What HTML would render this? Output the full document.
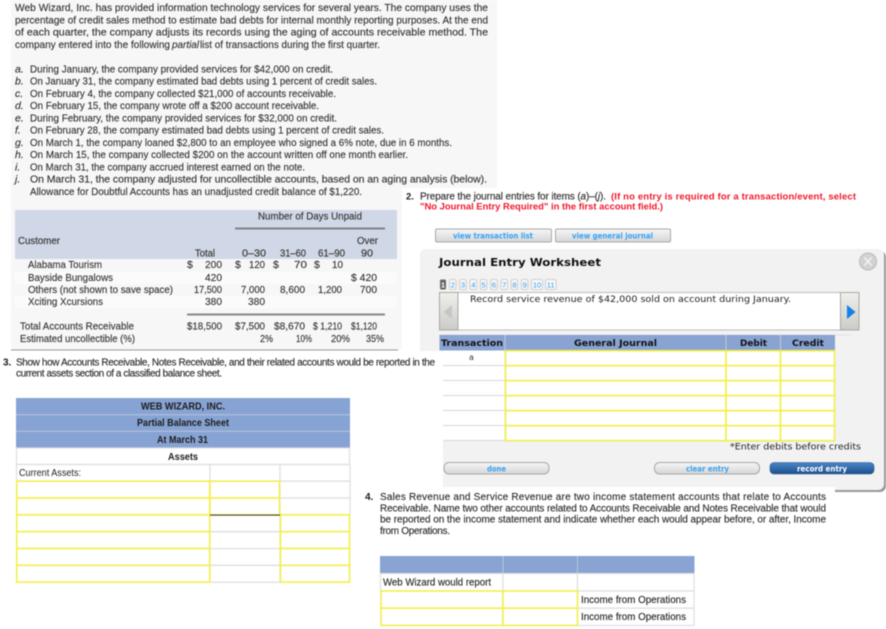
<!DOCTYPE html>
<html lang="en">
<head>
<meta charset="utf-8">
<title>Web Wizard</title>
<style>
html,body{margin:0;padding:0;background:#fff;width:886px;height:629px;overflow:hidden}
svg{display:block;position:absolute;left:0;top:0;filter:blur(.4px)}
text{font-family:"Liberation Sans",sans-serif;font-size:10.5px;fill:#333;stroke:#333;stroke-width:.13px}
.h{font-weight:bold;fill:#1c1c1c;stroke:none;font-size:10px}
.q{fill:#2c2c2c;font-size:10px}
.b{font-weight:bold;font-family:"DejaVu Sans",sans-serif;font-size:8px;fill:#36a2f4;stroke:none}
.n{font-size:7.5px;fill:#2f9bf0;stroke:none;text-anchor:middle}
.r{font-size:9.5px;font-weight:bold;fill:#f0182c;stroke:none}
.t{font-family:"DejaVu Sans",sans-serif;font-weight:bold;font-size:9px;fill:#111;stroke:none}
.v{font-family:"DejaVu Sans",sans-serif;font-size:8.5px;fill:#222;stroke:none}
.y{fill:#fff;stroke:#f3ef4e;stroke-width:1.6}
.c{fill:#fff;stroke:#dedede;stroke-width:1.2}
</style>
</head>
<body>
<svg width="886" height="629" viewBox="0 0 886 629" xmlns="http://www.w3.org/2000/svg">
<defs>
<linearGradient id="g" x1="0" y1="0" x2="0" y2="1"><stop offset="0" stop-color="#f6f6f6"/><stop offset="1" stop-color="#d6d6d6"/></linearGradient>
<linearGradient id="s" x1="0" y1="0" x2="0" y2="1"><stop offset="0" stop-color="#efefeb"/><stop offset="1" stop-color="#cbcbc7"/></linearGradient>
<linearGradient id="u" x1="0" y1="0" x2="0" y2="1"><stop offset="0" stop-color="#4a86c8"/><stop offset="1" stop-color="#1d4f8c"/></linearGradient>
</defs>
<rect width="886" height="629" fill="#fff"/>

<!-- intro background -->
<rect x="11" y="0" width="486" height="188" fill="#f7f7f7"/>
<rect x="11" y="188" width="391" height="162" fill="#f7f7f7"/>

<!-- intro -->
<text x="15" y="11" textLength="473" lengthAdjust="spacingAndGlyphs">Web Wizard, Inc. has provided information technology services for several years. The company uses the</text>
<text x="15" y="23.3" textLength="473" lengthAdjust="spacingAndGlyphs">percentage of credit sales method to estimate bad debts for internal monthly reporting purposes. At the end</text>
<text x="15" y="35.5" textLength="473" lengthAdjust="spacingAndGlyphs">of each quarter, the company adjusts its records using the aging of accounts receivable method. The</text>
<text x="15" y="47.8" textLength="155" lengthAdjust="spacingAndGlyphs">company entered into the following</text>
<text x="172" y="47.8" textLength="27" lengthAdjust="spacingAndGlyphs" font-style="italic">partial</text>
<text x="200" y="47.8" textLength="180" lengthAdjust="spacingAndGlyphs">list of transactions during the first quarter.</text>

<g font-style="italic">
<text x="15" y="72.3">a.</text><text x="15" y="84.6">b.</text><text x="15" y="97">c.</text><text x="15" y="109">d.</text><text x="15" y="121.5">e.</text><text x="15" y="133.7">f.</text><text x="15" y="146">g.</text><text x="15" y="158">h.</text><text x="15" y="170.5">i.</text><text x="15" y="182.7">j.</text>
</g>
<text x="30" y="72.3" textLength="303" lengthAdjust="spacingAndGlyphs">During January, the company provided services for $42,000 on credit.</text>
<text x="30" y="84.6" textLength="347" lengthAdjust="spacingAndGlyphs">On January 31, the company estimated bad debts using 1 percent of credit sales.</text>
<text x="30" y="97" textLength="306" lengthAdjust="spacingAndGlyphs">On February 4, the company collected $21,000 of accounts receivable.</text>
<text x="30" y="109" textLength="289" lengthAdjust="spacingAndGlyphs">On February 15, the company wrote off a $200 account receivable.</text>
<text x="30" y="121.5" textLength="307" lengthAdjust="spacingAndGlyphs">During February, the company provided services for $32,000 on credit.</text>
<text x="30" y="133.7" textLength="354" lengthAdjust="spacingAndGlyphs">On February 28, the company estimated bad debts using 1 percent of credit sales.</text>
<text x="30" y="146" textLength="422" lengthAdjust="spacingAndGlyphs">On March 1, the company loaned $2,800 to an employee who signed a 6% note, due in 6 months.</text>
<text x="30" y="158" textLength="378" lengthAdjust="spacingAndGlyphs">On March 15, the company collected $200 on the account written off one month earlier.</text>
<text x="30" y="170.5" textLength="275" lengthAdjust="spacingAndGlyphs">On March 31, the company accrued interest earned on the note.</text>
<text x="30" y="182.7" textLength="457" lengthAdjust="spacing">On March 31, the company adjusted for uncollectible accounts, based on an aging analysis (below).</text>
<text x="30" y="195" textLength="332" lengthAdjust="spacingAndGlyphs">Allowance for Doubtful Accounts has an unadjusted credit balance of $1,220.</text>

<!-- aging table -->
<rect x="15" y="210" width="382" height="49" fill="#d0d7e6"/>
<rect x="15" y="272" width="382" height="12" fill="#fbfbfb"/>
<rect x="15" y="296" width="382" height="12" fill="#fbfbfb"/>
<rect x="235" y="227.5" width="150" height="2" fill="#7f8288"/>
<text x="258" y="219.5" textLength="104" lengthAdjust="spacingAndGlyphs">Number of Days Unpaid</text>
<text x="18" y="244" textLength="42" lengthAdjust="spacingAndGlyphs">Customer</text>
<text x="357" y="244" textLength="21" lengthAdjust="spacingAndGlyphs">Over</text>
<text x="195" y="256.5" textLength="20" lengthAdjust="spacingAndGlyphs">Total</text>
<text x="242" y="256.5" textLength="24" lengthAdjust="spacingAndGlyphs">0–30</text>
<text x="280" y="256.5" textLength="26" lengthAdjust="spacingAndGlyphs">31–60</text>
<text x="318" y="256.5" textLength="27" lengthAdjust="spacingAndGlyphs">61–90</text>
<text x="361" y="256.5" textLength="12" lengthAdjust="spacingAndGlyphs">90</text>

<text x="28" y="268" textLength="74" lengthAdjust="spacingAndGlyphs">Alabama Tourism</text>
<text x="187" y="268">$</text><text x="205" y="268" textLength="17" lengthAdjust="spacingAndGlyphs">200</text>
<text x="235" y="268">$</text><text x="249" y="268" textLength="16" lengthAdjust="spacingAndGlyphs">120</text>
<text x="273" y="268">$</text><text x="294" y="268" textLength="13" lengthAdjust="spacingAndGlyphs">70</text>
<text x="314" y="268">$</text><text x="332" y="268" textLength="11" lengthAdjust="spacingAndGlyphs">10</text>

<text x="28" y="281" textLength="85" lengthAdjust="spacingAndGlyphs">Bayside Bungalows</text>
<text x="205" y="281" textLength="17" lengthAdjust="spacingAndGlyphs">420</text>
<text x="351" y="281" textLength="26" lengthAdjust="spacingAndGlyphs">$ 420</text>

<text x="28" y="293" textLength="145" lengthAdjust="spacingAndGlyphs">Others (not shown to save space)</text>
<text x="194" y="293" textLength="28" lengthAdjust="spacingAndGlyphs">17,500</text>
<text x="241" y="293" textLength="24" lengthAdjust="spacingAndGlyphs">7,000</text>
<text x="280" y="293" textLength="25" lengthAdjust="spacingAndGlyphs">8,600</text>
<text x="318" y="293" textLength="24" lengthAdjust="spacingAndGlyphs">1,200</text>
<text x="360" y="293" textLength="17" lengthAdjust="spacingAndGlyphs">700</text>

<text x="28" y="305" textLength="75" lengthAdjust="spacingAndGlyphs">Xciting Xcursions</text>
<text x="205" y="305" textLength="17" lengthAdjust="spacingAndGlyphs">380</text>
<text x="248" y="305" textLength="17" lengthAdjust="spacingAndGlyphs">380</text>

<rect x="187" y="313.5" width="198" height="2" fill="#85888e"/>

<text x="20" y="329.5" textLength="114" lengthAdjust="spacingAndGlyphs">Total Accounts Receivable</text>
<text x="187" y="329.5" textLength="35" lengthAdjust="spacingAndGlyphs">$18,500</text>
<text x="235" y="329.5" textLength="30" lengthAdjust="spacingAndGlyphs">$7,500</text>
<text x="274" y="329.5" textLength="31" lengthAdjust="spacingAndGlyphs">$8,670</text>
<text x="313" y="329.5" textLength="29" lengthAdjust="spacingAndGlyphs">$ 1,210</text>
<text x="351" y="329.5" textLength="26" lengthAdjust="spacingAndGlyphs">$1,120</text>

<text x="20" y="342" textLength="115" lengthAdjust="spacingAndGlyphs">Estimated uncollectible (%)</text>
<text x="260" y="342" textLength="13" lengthAdjust="spacingAndGlyphs">2%</text>
<text x="296" y="342" textLength="16" lengthAdjust="spacingAndGlyphs">10%</text>
<text x="331" y="342" textLength="19" lengthAdjust="spacingAndGlyphs">20%</text>
<text x="366" y="342" textLength="18" lengthAdjust="spacingAndGlyphs">35%</text>
<rect x="11" y="349.5" width="387" height="1" fill="#9a9a9a"/>

<!-- Q2 -->
<text class="h" x="406" y="199.5" style="font-size:9.5px">2.</text>
<text class="q" x="420" y="199.5" textLength="186" lengthAdjust="spacing">Prepare the journal entries for items (<tspan font-style="italic">a</tspan>)–(<tspan font-style="italic">j</tspan>).</text>
<text class="r" x="611" y="199.5" textLength="245" lengthAdjust="spacing">(If no entry is required for a transaction/event, select</text>
<text class="r" x="420" y="209.5" textLength="243" lengthAdjust="spacingAndGlyphs">"No Journal Entry Required" in the first account field.)</text>

<!-- top buttons -->
<rect x="435.5" y="229" width="116" height="13" rx="1.5" fill="url(#g)" stroke="#a8a8a8"/>
<rect x="555.5" y="229" width="115" height="13" rx="1.5" fill="url(#g)" stroke="#a8a8a8"/>
<text class="b" x="453" y="238.5" textLength="80" lengthAdjust="spacingAndGlyphs">view transaction list</text>
<text class="b" x="572" y="238.5" textLength="81" lengthAdjust="spacingAndGlyphs">view general journal</text>

<!-- panel -->
<rect x="422" y="251" width="464" height="241" rx="6" fill="#999"/>
<rect x="420" y="249" width="464" height="241" rx="6" fill="#f2f2f2"/>
<rect x="416" y="351" width="27" height="136" fill="#fff"/>
<rect x="416" y="487" width="419" height="12" fill="#fff"/>

<text x="439" y="266" textLength="162" lengthAdjust="spacingAndGlyphs" style="font-family:'DejaVu Sans',sans-serif;font-weight:bold;font-size:11px;fill:#111;stroke:none">Journal Entry Worksheet</text>

<circle cx="868" cy="261.5" r="8.5" fill="#d2d2d2" stroke="#bbb"/>
<path d="M864.500 257.500l7 8M871.500 257.500l-7 8" stroke="#f4f4f4" stroke-width="1.400" fill="none"/>

<!-- step numbers -->
<rect x="440" y="279.500" width="6" height="10" rx="1.500" fill="#666"/>
<text class="n" x="443" y="287.500" style="fill:#fff;font-weight:bold">1</text>
<g fill="#f8f8f8" stroke="#c4c4c4" stroke-width=".8">
<rect x="449.500" y="279.500" width="6.500" height="10" rx="1.500"/><rect x="459.700" y="279.500" width="6.500" height="10" rx="1.500"/><rect x="470" y="279.500" width="6.500" height="10" rx="1.500"/><rect x="480.300" y="279.500" width="6.500" height="10" rx="1.500"/><rect x="490.800" y="279.500" width="6.500" height="10" rx="1.500"/><rect x="501" y="279.500" width="6.500" height="10" rx="1.500"/><rect x="511.200" y="279.500" width="6.500" height="10" rx="1.500"/><rect x="521.400" y="279.500" width="6.500" height="10" rx="1.500"/><rect x="531.500" y="279.500" width="11" height="10" rx="1.500"/><rect x="545.500" y="279.500" width="10.500" height="10" rx="1.500"/>
</g>
<text class="n" x="452.800" y="287.500">2</text><text class="n" x="463" y="287.500">3</text><text class="n" x="473.300" y="287.500">4</text><text class="n" x="483.500" y="287.500">5</text><text class="n" x="494" y="287.500">6</text><text class="n" x="504.200" y="287.500">7</text><text class="n" x="514.500" y="287.500">8</text><text class="n" x="524.700" y="287.500">9</text><text class="n" x="537" y="287.500">10</text><text class="n" x="550.700" y="287.500">11</text>

<!-- prompt -->
<rect x="439.500" y="292.500" width="419" height="37.500" fill="#fff" stroke="#bdbdbd"/>
<rect x="439.500" y="292.500" width="18.500" height="37.500" fill="url(#s)" stroke="#a8a8a4"/>
<rect x="840.500" y="292.500" width="18.500" height="37.500" fill="url(#s)" stroke="#a8a8a4"/>
<path d="M452 305v14l-8.500-7z" fill="#c6c6c6"/>
<path d="M847 305v14l8.500-7z" fill="#1680e8"/>
<text class="v" x="470" y="302" textLength="321" lengthAdjust="spacingAndGlyphs">Record service revenue of $42,000 sold on account during January.</text>
<rect x="439" y="334.500" width="412" height="1" fill="#e2e2e2"/>

<!-- journal table -->
<rect x="439.500" y="335" width="395.500" height="15.500" fill="#89a3d2"/>
<path d="M505 335v15.500M726 335v15.500M780.500 335v15.500" stroke="#c2cbdc" stroke-width="1"/>
<text class="t" x="441" y="346" textLength="62" lengthAdjust="spacingAndGlyphs">Transaction</text>
<text class="t" x="574" y="346" textLength="83" lengthAdjust="spacingAndGlyphs">General Journal</text>
<text class="t" x="740" y="346" textLength="27" lengthAdjust="spacingAndGlyphs">Debit</text>
<text class="t" x="792" y="346" textLength="32" lengthAdjust="spacingAndGlyphs">Credit</text>
<rect x="443" y="350.500" width="62" height="90" fill="#fff"/>
<path d="M443 365.500h62M443 380.500h62M443 395.500h62M443 410.500h62M443 425.500h62M443 440.500h62M505 350.500v90" stroke="#d8d8d8" stroke-width="1" fill="none"/>
<text x="469" y="360" style="font-family:'DejaVu Sans',sans-serif;font-size:8px;fill:#333;stroke:none">a</text>
<rect class="y" x="505.500" y="350.700" width="220.500" height="15"/><rect class="y" x="726" y="350.700" width="54.500" height="15"/><rect class="y" x="780.500" y="350.700" width="54" height="15"/>
<rect class="y" x="505.500" y="365.700" width="220.500" height="15"/><rect class="y" x="726" y="365.700" width="54.500" height="15"/><rect class="y" x="780.500" y="365.700" width="54" height="15"/>
<rect class="y" x="505.500" y="380.700" width="220.500" height="15"/><rect class="y" x="726" y="380.700" width="54.500" height="15"/><rect class="y" x="780.500" y="380.700" width="54" height="15"/>
<rect class="y" x="505.500" y="395.700" width="220.500" height="15"/><rect class="y" x="726" y="395.700" width="54.500" height="15"/><rect class="y" x="780.500" y="395.700" width="54" height="15"/>
<rect class="y" x="505.500" y="410.700" width="220.500" height="15"/><rect class="y" x="726" y="410.700" width="54.500" height="15"/><rect class="y" x="780.500" y="410.700" width="54" height="15"/>
<rect class="y" x="505.500" y="425.700" width="220.500" height="15"/><rect class="y" x="726" y="425.700" width="54.500" height="15"/><rect class="y" x="780.500" y="425.700" width="54" height="15"/>
<text class="v" x="730" y="449.500" textLength="131" lengthAdjust="spacingAndGlyphs">*Enter debits before credits</text>

<!-- bottom buttons -->
<rect x="444" y="462.500" width="105" height="11.500" rx="5" fill="url(#g)" stroke="#a8a8a8"/>
<rect x="654.500" y="462.500" width="105" height="11.500" rx="5" fill="url(#g)" stroke="#a8a8a8"/>
<rect x="770" y="462.500" width="104" height="11.500" rx="4" fill="url(#u)" stroke="#2a5a94" stroke-width=".6"/>
<text class="b" x="487" y="471.500" textLength="19" lengthAdjust="spacingAndGlyphs">done</text>
<text class="b" x="686" y="471.500" textLength="43" lengthAdjust="spacingAndGlyphs">clear entry</text>
<text class="b" x="797" y="471.500" textLength="50" lengthAdjust="spacingAndGlyphs" style="fill:#fff">record entry</text>

<!-- Q3 -->
<text class="h" x="3" y="365.500">3.</text>
<text class="q" x="16" y="365.500" textLength="419" lengthAdjust="spacing">Show how Accounts Receivable, Notes Receivable, and their related accounts would be reported in the</text>
<text class="q" x="16" y="376.500" textLength="206" lengthAdjust="spacing">current assets section of a classified balance sheet.</text>

<!-- balance sheet -->
<rect x="16" y="398" width="334" height="50" fill="#87a3d3"/>
<path d="M16 414.700h334M16 431.300h334" stroke="#b9c6de" stroke-width="1"/>
<rect x="16.500" y="448" width="333" height="16.500" fill="#fff" stroke="#dedede" stroke-width="1.200"/>
<text class="h" x="141" y="409.500" textLength="84" lengthAdjust="spacingAndGlyphs">WEB WIZARD, INC.</text>
<text class="h" x="137" y="426" textLength="92" lengthAdjust="spacingAndGlyphs">Partial Balance Sheet</text>
<text class="h" x="157" y="443" textLength="51" lengthAdjust="spacingAndGlyphs">At March 31</text>
<text class="h" x="168" y="460" textLength="30" lengthAdjust="spacingAndGlyphs">Assets</text>
<rect class="c" x="16.500" y="464.500" width="193.500" height="16.700"/>
<rect class="c" x="210" y="464.500" width="70" height="16.700"/>
<rect class="c" x="280" y="464.500" width="70" height="16.700"/>
<text x="19" y="476" textLength="62" lengthAdjust="spacingAndGlyphs" style="font-size:10px;fill:#222;stroke:none">Current Assets:</text>
<rect class="c" x="280" y="481.200" width="70" height="16.800"/>
<rect class="c" x="280" y="498" width="70" height="16.800"/>
<rect class="c" x="210" y="515" width="70" height="16.800"/>
<rect class="c" x="210" y="531.800" width="70" height="16.800"/>
<rect class="c" x="210" y="548.600" width="70" height="16.800"/>
<rect class="c" x="210" y="565.400" width="70" height="16.800"/>
<rect class="y" x="16.700" y="481.200" width="193" height="16.800"/><rect class="y" x="210" y="481.200" width="69.500" height="16.800"/>
<rect class="y" x="16.700" y="498" width="193" height="16.800"/><rect class="y" x="210" y="498" width="69.500" height="16.800"/>
<rect class="y" x="16.700" y="514.900" width="193" height="16.800"/><rect class="y" x="280.500" y="514.900" width="69" height="16.800"/>
<rect class="y" x="16.700" y="531.700" width="193" height="16.800"/><rect class="y" x="280.500" y="531.700" width="69" height="16.800"/>
<rect class="y" x="16.700" y="548.500" width="193" height="16.800"/><rect class="y" x="280.500" y="548.500" width="69" height="16.800"/>
<rect class="y" x="16.700" y="565.300" width="193" height="16.800"/><rect class="y" x="280.500" y="565.300" width="69" height="16.800"/>
<rect x="210" y="514.600" width="70" height="1" fill="#333"/>

<!-- Q4 -->
<text class="h" x="365" y="500">4.</text>
<text class="q" x="380" y="500" textLength="446" lengthAdjust="spacing">Sales Revenue and Service Revenue are two income statement accounts that relate to Accounts</text>
<text class="q" x="380" y="511.500" textLength="446" lengthAdjust="spacing">Receivable. Name two other accounts related to Accounts Receivable and Notes Receivable that would</text>
<text class="q" x="380" y="522.700" textLength="446" lengthAdjust="spacing">be reported on the income statement and indicate whether each would appear before, or after, Income</text>
<text class="q" x="380" y="534" textLength="70" lengthAdjust="spacing">from Operations.</text>

<!-- table 4 -->
<rect x="380" y="556" width="314.500" height="17.500" fill="#89a3d2"/>
<path d="M503 556v17.500M577.500 556v17.500" stroke="#b9c6de" stroke-width="1"/>
<rect class="c" x="380.500" y="573.500" width="122.500" height="17.500"/>
<rect class="c" x="503" y="573.500" width="74.500" height="17.500"/>
<rect class="c" x="577.500" y="573.500" width="116.500" height="17.500"/>
<rect class="c" x="577.500" y="591" width="116.500" height="17.200"/>
<rect class="c" x="577.500" y="608.200" width="116.500" height="17.300"/>
<rect class="y" x="381" y="591" width="122" height="17.200"/><rect class="y" x="503" y="591" width="74.500" height="17.200"/>
<rect class="y" x="381" y="608.200" width="122" height="17.200"/><rect class="y" x="503" y="608.200" width="74.500" height="17.200"/>
<text x="383" y="585.500" textLength="108" lengthAdjust="spacingAndGlyphs" style="fill:#222">Web Wizard would report</text>
<text x="581" y="603" textLength="105" lengthAdjust="spacingAndGlyphs" style="fill:#222">Income from Operations</text>
<text x="581" y="620" textLength="105" lengthAdjust="spacingAndGlyphs" style="fill:#222">Income from Operations</text>
</svg>
</body>
</html>
